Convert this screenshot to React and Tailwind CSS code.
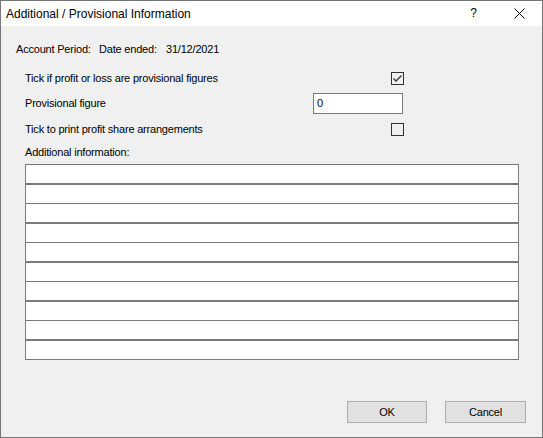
import React from "react";

const font = { fontFamily: '"Liberation Sans", Arial, sans-serif' };

function Checkbox({ checked }) {
  return (
    <div className="w-[13px] h-[13px] border border-[#333333] bg-[#f0f0f0] flex items-center justify-center">
      {checked && (
        <svg width="11" height="11" viewBox="0 0 11 11">
          <path d="M1.5 5.5 L4 8 L9.5 2.5" fill="none" stroke="#333333" strokeWidth="1.3" />
        </svg>
      )}
    </div>
  );
}

export default function App() {
  const rows = Array.from({ length: 10 }, (_, i) => i);
  return (
    <div
      className="w-[543px] h-[438px] border border-[#767676] bg-[#f0f0f0] flex flex-col text-[11px] leading-[13px] tracking-[-0.2px] text-black"
      style={font}
    >
      <div className="h-[25px] bg-white flex items-center justify-between shrink-0 tracking-normal">
        <span className="pl-[5px] text-[12px] leading-[14px] text-black">Additional / Provisional Information</span>
        <div className="flex items-center">
          <span className="text-[12px] leading-[14px] mr-[37px] mt-[-1px]">?</span>
          <svg width="11" height="11" viewBox="0 0 11 11" className="mr-[17px]">
            <path d="M0.5 0.5 L10.5 10.5 M10.5 0.5 L0.5 10.5" stroke="#000" strokeWidth="1" />
          </svg>
        </div>
      </div>

      <div className="flex flex-col">
        <div className="mt-[17px] ml-[15px] h-[13px] flex whitespace-nowrap">
          <span className="w-[83px]">Account Period:</span>
          <span className="w-[67px]">Date ended:</span>
          <span>31/12/2021</span>
        </div>

        <div className="mt-[16px] ml-[24px] w-[379px] h-[13px] flex items-center justify-between">
          <span>Tick if profit or loss are provisional figures</span>
          <Checkbox checked />
        </div>

        <div className="mt-[8px] ml-[24px] w-[378px] h-[21px] flex items-center justify-between">
          <span>Provisional figure</span>
          <div className="w-[90px] h-[21px] bg-white border border-[#7a7a7a] flex items-center pl-[3px]">0</div>
        </div>

        <div className="mt-[9px] ml-[24px] w-[379px] h-[13px] flex items-center justify-between">
          <span>Tick to print profit share arrangements</span>
          <Checkbox />
        </div>

        <div className="mt-[10px] ml-[24px] h-[13px]">Additional information:</div>

        <div className="mt-[5px] ml-[24px] w-[494px] flex flex-col border-b border-[#7a7a7a]">
          {rows.map((i) => (
            <div
              key={i}
              className={
                "bg-white border-x border-[#7a7a7a] " +
                (i % 2 === 0 ? "border-t h-[19px]" : "border-t-2 h-[20px]")
              }
            />
          ))}
        </div>

        <div className="mt-[41px] flex">
          <button className="ml-[346px] w-[80px] h-[22px] bg-[#e1e1e1] border border-[#adadad] flex items-center justify-center">
            OK
          </button>
          <button className="ml-[18px] w-[81px] h-[22px] bg-[#e1e1e1] border border-[#adadad] flex items-center justify-center">
            Cancel
          </button>
        </div>
      </div>
    </div>
  );
}
